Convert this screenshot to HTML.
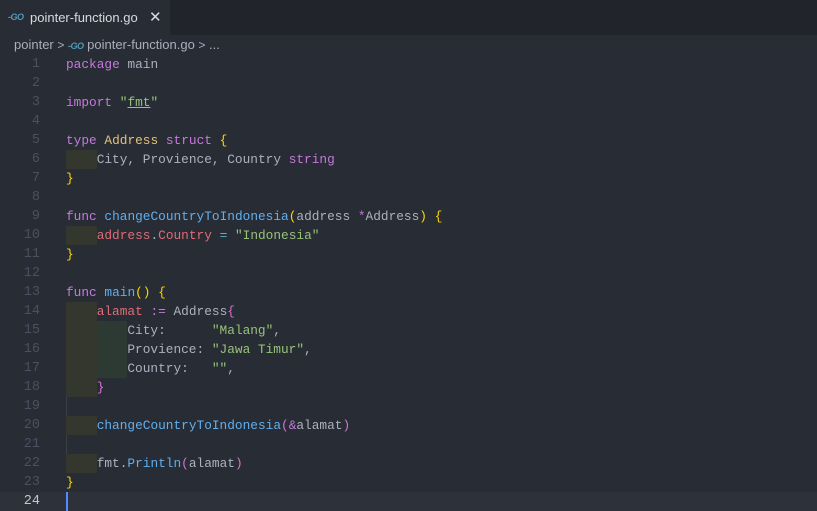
<!DOCTYPE html>
<html><head><style>
body{margin:0;width:817px;height:510px;background:#282c34;overflow:hidden;font-family:"Liberation Sans",sans-serif;position:relative}
.tabs{position:absolute;left:0;top:0;width:817px;height:35px;background:#21252b}
.tab{position:absolute;left:0;top:0;width:170px;height:35px;background:#282c34;color:#d7dae0;font-size:13px;line-height:35px}
.go{color:#519aba;font-weight:bold;font-size:9px;font-style:italic;letter-spacing:-.5px}
.bc{position:absolute;left:14px;top:36px;height:18px;line-height:18px;color:#a9afbb;font-size:13px}
.ed{position:absolute;left:0;top:55px;width:817px;font-family:"Liberation Mono",monospace;font-size:12.8px}
.l{height:19px;line-height:19px;position:relative;white-space:pre;color:#abb2bf}
.n{position:absolute;left:0;width:40px;text-align:right;color:#495162;font-size:13.5px}
.c{position:absolute;left:66px}
.cur{background:#2c313a}
.cur .n{color:#c6c6c6}
.i1,.i2{display:inline-block;height:19px;vertical-align:top}
.i1{background:#33372d;width:30.7px}
.i2{background:#2d3a34;width:30.7px}
.g{position:absolute;left:66px;top:0;width:1px;height:19px;background:#3b4048}
.k{color:#c678dd}.f{color:#61afef}.t{color:#e5c07b}.s{color:#98c379}.v{color:#e06c75}.y{color:#ffd700}.p{color:#da70d6}.o{color:#56b6c2}
</style></head><body>
<div class="tabs"><div class="tab"><span style="position:absolute;left:8px" class="go">-GO</span><span style="position:absolute;left:30px">pointer-function.go</span><span style="position:absolute;left:149px;font-size:15px">✕</span></div></div>
<div class="bc">pointer <span style="font-size:12px">&gt;</span> <span class="go">-GO</span> pointer-function.go <span style="font-size:12px">&gt;</span> ...</div>
<div class="ed">
<div class="l"><span class="n">1</span><span class="c"><span class="k">package</span> main</span></div>
<div class="l"><span class="n">2</span></div>
<div class="l"><span class="n">3</span><span class="c"><span class="k">import</span> <span class="s">"<span style="text-decoration:underline">fmt</span>"</span></span></div>
<div class="l"><span class="n">4</span></div>
<div class="l"><span class="n">5</span><span class="c"><span class="k">type</span> <span class="t">Address</span> <span class="k">struct</span> <span class="y">{</span></span></div>
<div class="l"><span class="n">6</span><span class="c"><span class="i1"></span>City, Provience, Country <span class="k">string</span></span></div>
<div class="l"><span class="n">7</span><span class="c"><span class="y">}</span></span></div>
<div class="l"><span class="n">8</span></div>
<div class="l"><span class="n">9</span><span class="c"><span class="k">func</span> <span class="f">changeCountryToIndonesia</span><span class="y">(</span>address <span class="k">*</span>Address<span class="y">)</span> <span class="y">{</span></span></div>
<div class="l"><span class="n">10</span><span class="c"><span class="i1"></span><span class="v">address</span>.<span class="v">Country</span> <span class="o">=</span> <span class="s">"Indonesia"</span></span></div>
<div class="l"><span class="n">11</span><span class="c"><span class="y">}</span></span></div>
<div class="l"><span class="n">12</span></div>
<div class="l"><span class="n">13</span><span class="c"><span class="k">func</span> <span class="f">main</span><span class="y">()</span> <span class="y">{</span></span></div>
<div class="l"><span class="n">14</span><span class="c"><span class="i1"></span><span class="v">alamat</span> <span class="k">:=</span> Address<span class="p">{</span></span></div>
<div class="l"><span class="n">15</span><span class="c"><span class="i1"></span><span class="i2"></span>City:      <span class="s">"Malang"</span>,</span></div>
<div class="l"><span class="n">16</span><span class="c"><span class="i1"></span><span class="i2"></span>Provience: <span class="s">"Jawa Timur"</span>,</span></div>
<div class="l"><span class="n">17</span><span class="c"><span class="i1"></span><span class="i2"></span>Country:   <span class="s">""</span>,</span></div>
<div class="l"><span class="n">18</span><span class="c"><span class="i1"></span><span class="p">}</span></span></div>
<div class="l"><span class="n">19</span><span class="g"></span></div>
<div class="l"><span class="n">20</span><span class="c"><span class="i1"></span><span class="f">changeCountryToIndonesia</span><span class="p">(</span><span class="k">&amp;</span>alamat<span class="p">)</span></span></div>
<div class="l"><span class="n">21</span><span class="g"></span></div>
<div class="l"><span class="n">22</span><span class="c"><span class="i1"></span>fmt.<span class="f">Println</span><span class="p">(</span>alamat<span class="p">)</span></span></div>
<div class="l"><span class="n">23</span><span class="c"><span class="y">}</span></span></div>
<div class="l cur"><span class="n">24</span><span class="c" style="border-left:2px solid #528bff;height:19px"></span></div>
</div>
</body></html>
